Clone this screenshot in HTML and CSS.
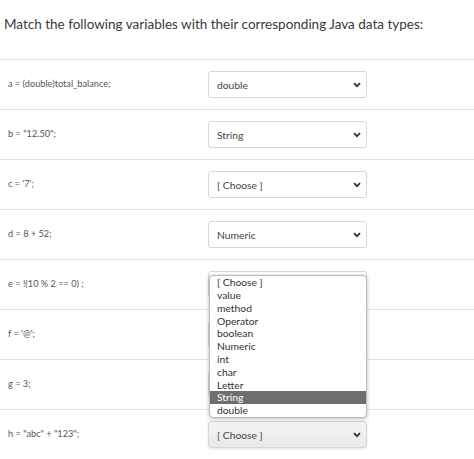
FILE: index.html
```html
<!DOCTYPE html>
<html>
<head>
<meta charset="utf-8">
<link rel="stylesheet" href="styles.css">
</head>
<body>
<div class="page">
  <h1 class="title">Match the following variables with their corresponding Java data types:</h1>
  <div class="rows">
    <div class="row">
      <div class="label">a = (double)total_balance;</div>
      <div class="select"><span>double</span><svg class="chev" width="8" height="6" viewBox="0 0 8 6"><path d="M1 1.2 L4 4.2 L7 1.2" fill="none" stroke="#333" stroke-width="1.8"/></svg></div>
    </div>
    <div class="row">
      <div class="label">b = "12.50";</div>
      <div class="select"><span>String</span><svg class="chev" width="8" height="6" viewBox="0 0 8 6"><path d="M1 1.2 L4 4.2 L7 1.2" fill="none" stroke="#333" stroke-width="1.8"/></svg></div>
    </div>
    <div class="row">
      <div class="label">c = '7';</div>
      <div class="select"><span>[ Choose ]</span><svg class="chev" width="8" height="6" viewBox="0 0 8 6"><path d="M1 1.2 L4 4.2 L7 1.2" fill="none" stroke="#333" stroke-width="1.8"/></svg></div>
    </div>
    <div class="row">
      <div class="label">d = 8 + 52;</div>
      <div class="select"><span>Numeric</span><svg class="chev" width="8" height="6" viewBox="0 0 8 6"><path d="M1 1.2 L4 4.2 L7 1.2" fill="none" stroke="#333" stroke-width="1.8"/></svg></div>
    </div>
    <div class="row">
      <div class="label">e = !(10 % 2 == 0) ;</div>
      <div class="select"><span>[ Choose ]</span><svg class="chev" width="8" height="6" viewBox="0 0 8 6"><path d="M1 1.2 L4 4.2 L7 1.2" fill="none" stroke="#333" stroke-width="1.8"/></svg></div>
    </div>
    <div class="row">
      <div class="label">f = '@';</div>
      <div class="select"><span>[ Choose ]</span><svg class="chev" width="8" height="6" viewBox="0 0 8 6"><path d="M1 1.2 L4 4.2 L7 1.2" fill="none" stroke="#333" stroke-width="1.8"/></svg></div>
    </div>
    <div class="row">
      <div class="label">g = 3;</div>
      <div class="select"><span>[ Choose ]</span><svg class="chev" width="8" height="6" viewBox="0 0 8 6"><path d="M1 1.2 L4 4.2 L7 1.2" fill="none" stroke="#333" stroke-width="1.8"/></svg></div>
    </div>
    <div class="row">
      <div class="label">h = "abc" + "123";</div>
      <div class="select open"><span>[ Choose ]</span><svg class="chev" width="8" height="6" viewBox="0 0 8 6"><path d="M1 1.2 L4 4.2 L7 1.2" fill="none" stroke="#333" stroke-width="1.8"/></svg>
        <ul class="menu">
          <li>[ Choose ]</li>
          <li>value</li>
          <li>method</li>
          <li>Operator</li>
          <li>boolean</li>
          <li>Numeric</li>
          <li>int</li>
          <li>char</li>
          <li>Letter</li>
          <li class="hl">String</li>
          <li>double</li>
        </ul>
      </div>
    </div>
  </div>
</div>
</body>
</html>
```
FILE: styles.css
```css
html, body {
  margin: 0;
  padding: 0;
  background: #fff;
}
body {
  font-family: Lato, "Open Sans", sans-serif;
  color: #333;
  overflow: hidden;
}
.page {
  width: 474px;
}
.title {
  margin: 0;
  height: 59px;
  box-sizing: border-box;
  padding: 15px 0 0 4px;
  font-size: 13.5px;
  font-weight: 400;
  color: #3a3a3a;
  line-height: 18px;
  white-space: nowrap;
}
.row {
  display: grid;
  grid-template-columns: 208px 159px;
  align-items: center;
  height: 50px;
  box-sizing: border-box;
  border-top: 1.5px solid #e2e2e2;
}
.label {
  padding-left: 8px;
  font-size: 9.2px;
  color: #555;
  padding-bottom: 2px;
}
.select {
  position: relative;
  height: 27px;
  box-sizing: border-box;
  border: 1px solid #d6d6d6;
  border-radius: 3px;
  background: #fff;
  display: flex;
  align-items: center;
  justify-content: space-between;
  padding: 0 5px 0 8px;
  font-size: 10.3px;
  color: #444;
}
.select.open {
  background: linear-gradient(#f4f4f4, #e9e9e9);
  box-shadow: 0 1px 3px rgba(0,0,0,0.12);
}
.chev {
  display: block;
}
.menu {
  position: absolute;
  left: 0;
  right: -1px;
  bottom: calc(100% + 4px);
  margin: 0;
  padding: 0;
  list-style: none;
  background: #fff;
  border: 1px solid #b9b9b9;
  border-radius: 4px;
  box-shadow: 0 1px 4px rgba(0,0,0,0.25);
  font-size: 10.3px;
  color: #333;
  overflow: hidden;
}
.menu li {
  height: 12.8px;
  line-height: 12.8px;
  padding-left: 7px;
}
.menu li.hl {
  background: #6e6e6e;
  color: #fff;
}
```
